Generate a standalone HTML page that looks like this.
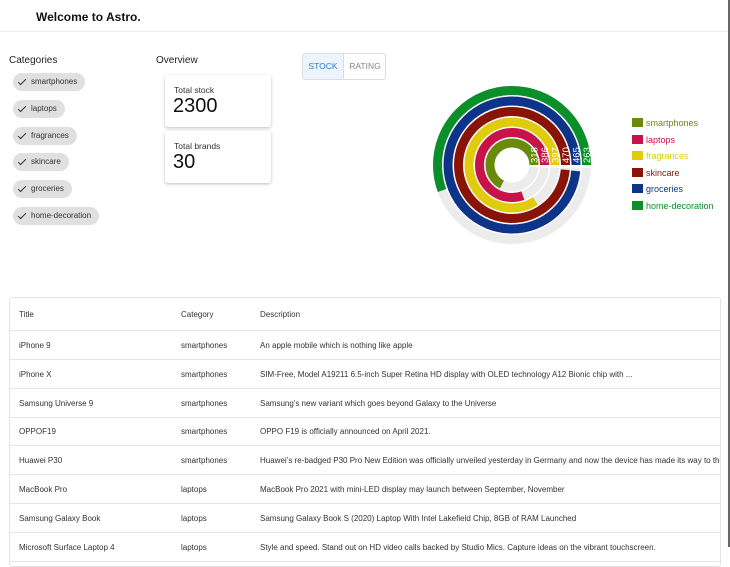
<!DOCTYPE html>
<html><head><meta charset="utf-8"><style>
*{box-sizing:border-box;margin:0;padding:0}
body{width:730px;height:547px;overflow:hidden;background:#fff;font-family:"Liberation Sans",sans-serif;color:#222;position:relative}
.hdr{position:absolute;left:0;top:0;width:728px;height:32px;border-bottom:1px solid #eee}
.hdr h1{position:absolute;left:36px;top:10px;font-size:12px;font-weight:bold;color:#111}
.frame{position:absolute;right:0;top:0;width:2px;height:547px;background:#666}
.lbl{position:absolute;font-size:10px;color:#222}
.chip{position:absolute;left:13px;height:18px;border-radius:9px;background:#e0e0e0;font-size:8px;color:#333;line-height:18px;padding:0 8px 0 18px}
.chip:before{content:"";position:absolute;left:7px;top:4px;width:3px;height:7px;border:solid #333;border-width:0 1.3px 1.3px 0;transform:rotate(45deg)}
.card{position:absolute;left:165px;width:106px;height:52px;border-radius:3px;box-shadow:0 1px 3px rgba(0,0,0,.25);background:#fff}
.card .t{position:absolute;left:9px;top:10px;font-size:8.5px;color:#333}
.card .v{position:absolute;left:8px;top:20px;font-size:20px;color:#111}
.tog{position:absolute;left:302px;top:53px;width:84px;height:27px;border:1px solid #ddd;border-radius:3px;font-size:8.5px;overflow:hidden}
.tog div{position:absolute;top:0;height:25px;line-height:25px;text-align:center}
.leg{position:absolute;left:632px;font-size:9px}
.leg i{display:inline-block;width:11px;height:9px;vertical-align:-1px;margin-right:3px}
.tbl{position:absolute;left:9px;top:297px;width:712px;height:270px;border:1px solid #e4e4e4;border-radius:3px;overflow:hidden}
.row{position:absolute;left:0;width:710px;height:29px;border-bottom:1px solid #e6e6e6;font-size:8px;color:#333;line-height:29px;white-space:nowrap;overflow:hidden}
.row span{position:absolute}
</style></head><body>
<div class="hdr"><h1>Welcome to Astro.</h1></div>
<div class="frame"></div>
<div class="lbl" style="left:9px;top:55px">Categories</div>
<div class="chip" style="top:73px">smartphones</div>
<div class="chip" style="top:100px">laptops</div>
<div class="chip" style="top:127px">fragrances</div>
<div class="chip" style="top:153px">skincare</div>
<div class="chip" style="top:180px">groceries</div>
<div class="chip" style="top:207px">home-decoration</div>
<div class="lbl" style="left:156px;top:55px">Overview</div>
<div class="card" style="top:75px"><div class="t">Total stock</div><div class="v">2300</div></div>
<div class="card" style="top:131px"><div class="t">Total brands</div><div class="v">30</div></div>
<div class="tog"><div style="left:0;width:41px;background:#eef4fc;color:#2a7ad6;border-right:1px solid #ddd">STOCK</div><div style="left:41px;width:42px;color:#888">RATING</div></div>
<svg style="position:absolute;left:0;top:0" width="730" height="300">
<g transform="translate(512,165) scale(1,-1)" fill="none" stroke-width="9">
<circle r="74.5" stroke="#ececec" stroke-dasharray="465 999"/>
<circle r="64" stroke="#ececec" stroke-dasharray="399 999"/>
<circle r="53.5" stroke="#ececec" stroke-dasharray="333 999"/>
<circle r="43" stroke="#ececec" stroke-dasharray="267 999"/>
<circle r="32.5" stroke="#ececec" stroke-dasharray="201 999"/>
<circle r="22" stroke="#ececec" stroke-dasharray="136 999"/>
<circle r="74.5" stroke="#0a8f2a" stroke-dasharray="260 999"/>
<circle r="64" stroke="#0d3488" stroke-dasharray="396 999"/>
<circle r="53.5" stroke="#8a1307" stroke-dasharray="331 999"/>
<circle r="43" stroke="#e0cc0c" stroke-dasharray="227 999"/>
<circle r="32.5" stroke="#c8124a" stroke-dasharray="164 999"/>
<circle r="22" stroke="#6a8a0c" stroke-dasharray="93 999"/>
</g>
<g font-family="Liberation Sans" font-size="9.5" fill="#fff" text-anchor="start">
<text transform="translate(590,163) rotate(-90)">263</text>
<text transform="translate(579.5,163) rotate(-90)">465</text>
<text transform="translate(569,163) rotate(-90)">470</text>
<text transform="translate(558.5,163) rotate(-90)">397</text>
<text transform="translate(548,163) rotate(-90)">386</text>
<text transform="translate(537.5,163) rotate(-90)">318</text>
</g>
</svg>
<div class="leg" style="top:118px;color:#6a8a0c"><i style="background:#6a8a0c"></i>smartphones</div>
<div class="leg" style="top:135px;color:#c8124a"><i style="background:#c8124a"></i>laptops</div>
<div class="leg" style="top:151px;color:#e0cc0c"><i style="background:#e0cc0c"></i>fragrances</div>
<div class="leg" style="top:168px;color:#8a1307"><i style="background:#8a1307"></i>skincare</div>
<div class="leg" style="top:184px;color:#0d3488"><i style="background:#0d3488"></i>groceries</div>
<div class="leg" style="top:201px;color:#0a8f2a"><i style="background:#0a8f2a"></i>home-decoration</div>
<div class="tbl">
<div class="row" style="top:0;height:33px;line-height:33px"><span style="left:9px">Title</span><span style="left:171px">Category</span><span style="left:250px">Description</span></div>
<div class="row" style="top:33px"><span style="left:9px">iPhone 9</span><span style="left:171px">smartphones</span><span style="left:250px">An apple mobile which is nothing like apple</span></div>
<div class="row" style="top:62px"><span style="left:9px">iPhone X</span><span style="left:171px">smartphones</span><span style="left:250px">SIM-Free, Model A19211 6.5-inch Super Retina HD display with OLED technology A12 Bionic chip with ...</span></div>
<div class="row" style="top:91px"><span style="left:9px">Samsung Universe 9</span><span style="left:171px">smartphones</span><span style="left:250px">Samsung's new variant which goes beyond Galaxy to the Universe</span></div>
<div class="row" style="top:119px"><span style="left:9px">OPPOF19</span><span style="left:171px">smartphones</span><span style="left:250px">OPPO F19 is officially announced on April 2021.</span></div>
<div class="row" style="top:148px"><span style="left:9px">Huawei P30</span><span style="left:171px">smartphones</span><span style="left:250px">Huawei’s re-badged P30 Pro New Edition was officially unveiled yesterday in Germany and now the device has made its way to the UK.</span></div>
<div class="row" style="top:177px"><span style="left:9px">MacBook Pro</span><span style="left:171px">laptops</span><span style="left:250px">MacBook Pro 2021 with mini-LED display may launch between September, November</span></div>
<div class="row" style="top:206px"><span style="left:9px">Samsung Galaxy Book</span><span style="left:171px">laptops</span><span style="left:250px">Samsung Galaxy Book S (2020) Laptop With Intel Lakefield Chip, 8GB of RAM Launched</span></div>
<div class="row" style="top:235px"><span style="left:9px">Microsoft Surface Laptop 4</span><span style="left:171px">laptops</span><span style="left:250px">Style and speed. Stand out on HD video calls backed by Studio Mics. Capture ideas on the vibrant touchscreen.</span></div>
</div>
</body></html>
